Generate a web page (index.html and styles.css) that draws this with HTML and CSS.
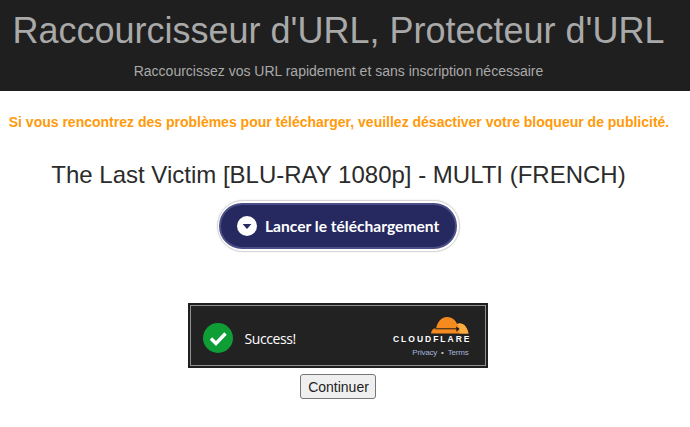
FILE: index.html
```html
<!DOCTYPE html>
<html lang="fr">
<head>
<meta charset="utf-8">
<title>Raccourcisseur d'URL</title>
<link rel="stylesheet" href="styles.css">
</head>
<body>
<header class="site-header">
  <h1 class="site-title">Raccourcisseur d'URL, Protecteur d'URL</h1>
  <p class="site-tagline">Raccourcissez vos URL rapidement et sans inscription nécessaire</p>
</header>
<main class="content">
  <p class="notice">Si vous rencontrez des problèmes pour télécharger, veuillez désactiver votre bloqueur de publicité.</p>
  <h2 class="file-title">The Last Victim [BLU-RAY 1080p] - MULTI (FRENCH)</h2>
  <a class="download" href="#">
    <span class="download-inner">
      <svg class="download-icon" viewBox="0 0 20 20" width="20" height="20" aria-hidden="true">
        <circle cx="10" cy="10" r="10" fill="#fff"/>
        <path d="M5.600 8h8.800l-4.400 5z" fill="#25295f"/>
      </svg>
      <span>Lancer le téléchargement</span>
    </span>
  </a>
  <div class="captcha">
    <div class="captcha-status">
      <svg class="captcha-check" viewBox="0 0 30 30" width="30" height="30" aria-hidden="true">
        <circle cx="15" cy="15" r="15" fill="#0f9d36"/>
        <path d="M8 15.500l5 5 9.500-10" fill="none" stroke="#fff" stroke-width="3.400"/>
      </svg>
      <span>Success!</span>
    </div>
    <div class="captcha-brand">
      <svg class="cloud" viewBox="0 0 40 20" width="40" height="20" aria-hidden="true">
        <path d="M1 18.500c.3-3.400 2.400-5.300 5.200-5.500C7.500 7 11 2 17 2c5 0 8.500 3 10 7 1-.6 2.500-.8 3.800-.4 3.400.7 6 3.600 7.700 9.900z" fill="#f58a1f"/>
        <path d="M27 9c3-1 6.500-.5 8.500 2.500 1.500 2 2.500 4.500 3 7H29.500c.7-3.600 0-6.800-2.500-9.500z" fill="#fbad41"/>
        <path d="M5 13.800h23.500" stroke="#1f1f1f" stroke-width="1" fill="none"/>
        <path d="M26 11.500l3.500 2.300-3 3.200z" fill="#1f1f1f"/>
      </svg>
      <span class="wordmark">CLOUDFLARE</span>
      <span class="captcha-links"><span>Privacy</span><span class="dot">•</span><span>Terms</span></span>
    </div>
  </div>
  <button class="continue" type="button">Continuer</button>
</main>
</body>
</html>
```
FILE: styles.css
```css
* { box-sizing: border-box; }
html, body { margin: 0; padding: 0; }
body {
  background: #fff;
  color: #222;
  font-family: "Liberation Sans", Arial, sans-serif;
  height: 427px;
  overflow: hidden;
}
.site-header {
  background: #1f1f1f;
  height: 91px;
  padding: 10px 13px 0 0;
  text-align: center;
}
.site-title {
  margin: 0;
  color: #a9a9a9;
  font-size: 36px;
  font-weight: 400;
  line-height: 41px;
}
.site-tagline {
  margin: 12px 0 0;
  color: #a9a9a9;
  font-size: 14px;
  line-height: 16px;
}
.content {
  display: flex;
  flex-direction: column;
  align-items: center;
  padding-right: 13px;
}
.notice {
  margin: 23px 0 0 1px;
  color: #ff9a0a;
  font-size: 14px;
  font-weight: 700;
  line-height: 16px;
  white-space: nowrap;
}
.file-title {
  margin: 31px 0 0;
  color: #2b2b2b;
  font-size: 24px;
  font-weight: 400;
  line-height: 28px;
}
.download {
  display: block;
  width: 243px;
  height: 52px;
  margin: 11px 0 0;
  padding: 2px 2px 2px 1px;
  border: 1px solid #d6d6d6;
  border-radius: 26px;
  background: #fff;
  box-shadow: 0 0 2px #e2e2e2;
  text-decoration: none;
}
.download-inner {
  display: flex;
  align-items: center;
  gap: 8px;
  height: 100%;
  padding-left: 16px;
  border: 2px solid #4b4f86;
  border-radius: 23px;
  background: #25295f;
  color: #fff;
  font-family: Lato, sans-serif;
  font-size: 15.6px;
  font-weight: 700;
}
.download-icon { flex: none; }
.captcha {
  display: flex;
  justify-content: space-between;
  width: 300px;
  height: 65px;
  margin: 51px 2px 0 0;
  border: 2px solid #1f1f1f;
  outline: 1px solid #8f8f8f;
  outline-offset: -3px;
  background: #222;
  color: #fff;
}
.captcha-status {
  display: flex;
  align-items: center;
  gap: 12px;
  padding: 5px 0 0 13px;
  font-family: "Open Sans", sans-serif;
  font-size: 14px;
  letter-spacing: -0.4px;
}
.captcha-brand {
  display: flex;
  flex-direction: column;
  align-items: flex-end;
  padding: 10px 16px 0 0;
}
.cloud { display: block; }
.wordmark {
  margin: 0 -2px 0 0;
  font-size: 8.5px;
  font-weight: 700;
  line-height: 9px;
  letter-spacing: 2px;
}
.captcha-links {
  display: flex;
  gap: 4px;
  margin-top: 4px;
  margin-right: 1px;
  color: #a3b4d8;
  font-size: 8px;
  line-height: 10px;
  letter-spacing: -0.2px;
}
.dot { color: #c9c9c9; }
.continue {
  width: 76px;
  height: 25px;
  margin: 6px 2px 0 0;
  padding: 0 0 0 2px;
  border: 1px solid #767676;
  border-radius: 3px;
  background: #efefef;
  color: #222;
  font-family: "Liberation Sans", Arial, sans-serif;
  font-size: 14px;
}
```
